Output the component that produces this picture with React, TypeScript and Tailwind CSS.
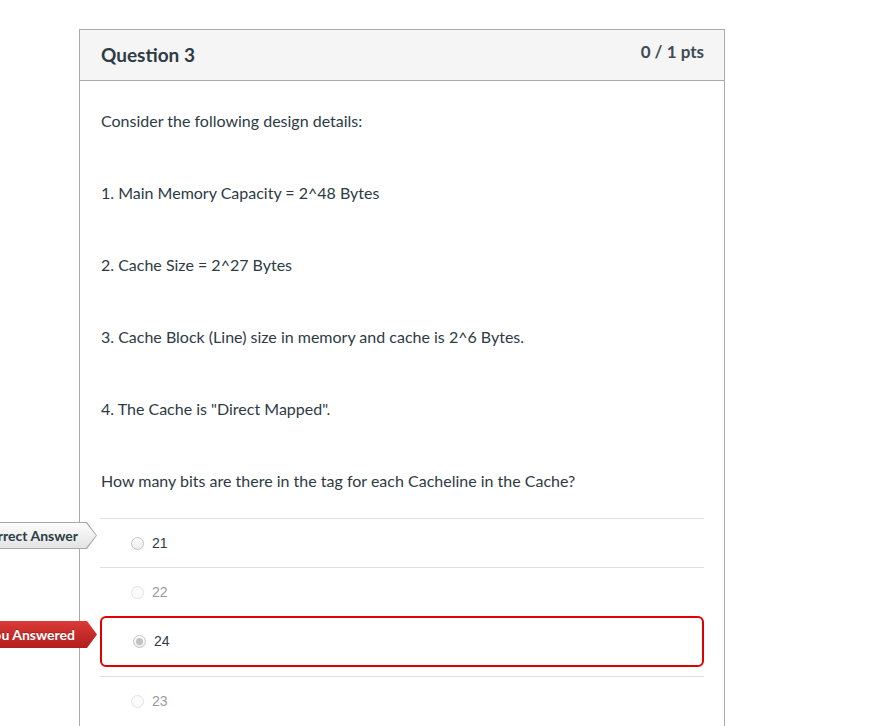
import React from 'react';

type Answer = {
  text: string;
  muted?: boolean;
  picked?: boolean;
  tag?: 'correct' | 'yours';
};

const answers: Answer[] = [
  { text: '21', tag: 'correct' },
  { text: '22', muted: true },
  { text: '24', picked: true, tag: 'yours' },
  { text: '23', muted: true },
];

const details = [
  'Consider the following design details:',
  '1. Main Memory Capacity = 2^48 Bytes',
  '2. Cache Size = 2^27 Bytes',
  '3. Cache Block (Line) size in memory and cache is 2^6 Bytes.',
  '4. The Cache is "Direct Mapped".',
  'How many bits are there in the tag for each Cacheline in the Cache?',
];

function Tag({ kind }: { kind: 'correct' | 'yours' }) {
  const shape =
    '[clip-path:polygon(0_0,calc(100%-10px)_0,100%_50%,calc(100%-10px)_100%,0_100%)]';
  if (kind === 'correct') {
    return (
      <div className={`absolute right-[calc(100%+3px)] top-[3px] h-[27px] w-[130px] bg-[#a9a9a9] ${shape}`}>
        <div className="absolute inset-[1px] flex items-center justify-end bg-gradient-to-b from-[#fdfdfd] to-[#e3e3e3] pr-[18px] text-[14px] font-bold text-[#2d3b45] [clip-path:polygon(0_0,calc(100%-10px)_0,100%_50%,calc(100%-10px)_100%,0_100%)]">
          Correct Answer
        </div>
      </div>
    );
  }
  return (
    <div
      className={`absolute right-[calc(100%+5px)] top-[3px] flex h-[27px] w-[130px] items-center justify-end bg-gradient-to-b from-[#dc3a36] to-[#b01e1e] pr-[22px] text-[14px] font-bold text-white [text-shadow:0_-1px_0_rgba(0,0,0,0.25)] ${shape}`}
    >
      You Answered
    </div>
  );
}

function Radio({ checked, muted }: { checked?: boolean; muted?: boolean }) {
  return (
    <span
      className={`flex h-[13px] w-[13px] shrink-0 items-center justify-center rounded-full border ${
        muted ? 'border-[#e2e2e2] bg-[#fbfbfb]' : 'border-[#c4c4c4] bg-gradient-to-b from-white to-[#ececec]'
      }`}
    >
      {checked && <span className="h-[7px] w-[7px] rounded-full bg-[#c2c2c2]" />}
    </span>
  );
}

function AnswerRow({ a }: { a: Answer }) {
  const label = (
    <>
      <Radio checked={a.picked} muted={a.muted} />
      <span
        className={`ml-[8px] font-['Liberation_Sans',Arial,sans-serif] text-[14px] ${
          a.muted ? 'text-[#9a9a9a]' : 'text-[#2d3b45]'
        }`}
      >
        {a.text}
      </span>
    </>
  );

  if (a.picked) {
    return (
      <div className="relative flex h-[51px] items-center rounded-[6px] border-2 border-[#e00000] pl-[31px]">
        {a.tag && <Tag kind={a.tag} />}
        {label}
      </div>
    );
  }

  return (
    <div className="relative flex h-[49px] items-center border-t border-[#e0e0e0] pl-[31px] last:mt-[9px]">
      {a.tag && <Tag kind={a.tag} />}
      {label}
    </div>
  );
}

export default function App() {
  return (
    <div className="h-[726px] overflow-hidden bg-white font-['Lato','Noto_Sans',sans-serif] text-[#2d3b45]">
      <div className="ml-[79px] mt-[29px] w-[646px] border border-[#aaaaaa]">
        <div className="flex h-[51px] items-center justify-between border-b border-[#aaaaaa] bg-[#f5f5f5] pl-[21px] pr-[20px]">
          <h2 className="text-[19px] font-bold">Question 3</h2>
          <span className="mb-[6px] text-[17px] font-bold text-[#3d4b55]">0 / 1 pts</span>
        </div>

        <div className="px-[20px] pt-[28px] pb-[40px]">
          <div className="flex flex-col gap-[48px] pl-[1px] text-[16px] leading-[24px]">
            {details.map((line) => (
              <p key={line}>{line}</p>
            ))}
          </div>

          <div className="mt-[25px]">
            {answers.map((a) => (
              <AnswerRow key={a.text} a={a} />
            ))}
          </div>
        </div>
      </div>
    </div>
  );
}
